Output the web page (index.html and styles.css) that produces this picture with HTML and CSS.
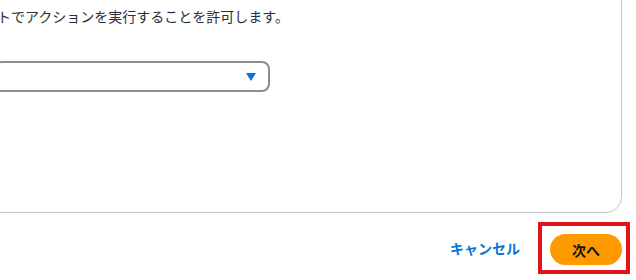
FILE: index.html
```html
<!DOCTYPE html>
<html lang="ja">
<head>
<meta charset="utf-8">
<title>権限</title>
<link rel="stylesheet" href="styles.css">
</head>
<body>
<div class="page">
  <section class="card">
    <p class="desc">トでアクションを実行することを許可します。</p>
    <div class="select">
      <svg class="caret" width="10" height="8" viewBox="0 0 10 8" aria-hidden="true"><polygon points="0,0 10,0 5,8" fill="#0972d3"/></svg>
    </div>
  </section>
  <footer class="actions">
    <button class="link-btn" type="button">キャンセル</button>
    <div class="highlight">
      <button class="primary-btn" type="button">次へ</button>
    </div>
  </footer>
</div>
</body>
</html>
```
FILE: styles.css
```css
html, body {
  margin: 0;
  padding: 0;
  background: #ffffff;
  overflow: hidden;
}
body {
  font-family: "Noto Sans CJK JP", "Noto Sans", "Liberation Sans", sans-serif;
  color: #16191f;
}
.page {
  width: 636px;
  height: 280px;
  display: flex;
  flex-direction: column;
}
.card {
  box-sizing: border-box;
  height: 253px;
  margin: -40px 14px 0 -40px;
  padding: 45px 0 0 33px;
  border: 1px solid #c6c6cd;
  border-radius: 16px;
}
.desc {
  margin: 0 0 0 3px;
  font-size: 14px;
  line-height: 20px;
  color: #2a2e33;
  white-space: nowrap;
}
.select {
  box-sizing: border-box;
  margin-top: 35px;
  width: 276px;
  height: 31px;
  border: 2px solid #8c8c94;
  border-radius: 8px;
  display: flex;
  justify-content: flex-end;
  align-items: center;
  padding-right: 12px;
}
.caret {
  display: block;
}
.actions {
  display: flex;
  justify-content: flex-end;
  align-items: center;
  margin: 9px 6px 0 0;
}
.link-btn {
  border: 0;
  background: none;
  padding: 0;
  margin-right: 18px;
  font-family: inherit;
  font-size: 14px;
  font-weight: 700;
  line-height: 20px;
  color: #0972d3;
}
.highlight {
  border: 4px solid #e2141c;
  padding: 8px 4px 5px 8px;
}
.primary-btn {
  display: block;
  box-sizing: border-box;
  height: 31px;
  padding: 0 22px;
  border: 0;
  border-radius: 16px;
  background: #ff9900;
  font-family: inherit;
  font-size: 14px;
  font-weight: 700;
  color: #0f141a;
}
```
